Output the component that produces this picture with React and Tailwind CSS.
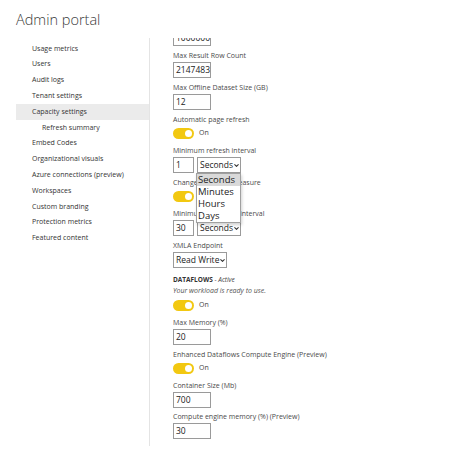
import { ChevronDown } from 'lucide-react';

const navItems = [
   { label: 'Usage metrics' },
   { label: 'Users' },
   { label: 'Audit logs' },
   { label: 'Tenant settings' },
   { label: 'Capacity settings', active: true },
   { label: 'Refresh summary', sub: true },
   { label: 'Embed Codes' },
   { label: 'Organizational visuals' },
   { label: 'Azure connections (preview)' },
   { label: 'Workspaces' },
   { label: 'Custom branding' },
   { label: 'Protection metrics' },
   { label: 'Featured content' },
];

function Label({ children, className = '' }) {
   return (
      <div className={`h-[11px] leading-[11px] text-[7px] text-[#4a4a4a] whitespace-nowrap ${className}`}>
         {children}
      </div>
   );
}

function TextBox({ value, className = 'w-[38px]' }) {
   return (
      <div
         className={`h-[16px] border border-[#9a9a9a] bg-white px-[2px] text-[8.5px] leading-[14px] text-[#222] overflow-hidden ${className}`}
      >
         {value}
      </div>
   );
}

function Select({ value, className = 'w-[44px]', children }) {
   return (
      <div
         className={`relative h-[16px] border border-[#9a9a9a] bg-white pl-[2px] pr-[1px] flex items-center justify-between text-[8.5px] text-[#222] ${className}`}
      >
         <span className="leading-[14px] whitespace-nowrap">{value}</span>
         <ChevronDown size={7} strokeWidth={3.5} className="text-[#333] shrink-0" />
         {children}
      </div>
   );
}

function Toggle({ className = 'mt-[2px]' }) {
   return (
      <div className={`h-[12px] flex items-center gap-[5px] ${className}`}>
         <div className="w-[21px] h-[11px] rounded-full bg-[#f2c811] flex items-center justify-end pr-[2px]">
            <div className="w-[7px] h-[7px] rounded-full bg-white" />
         </div>
         <span className="text-[7px] text-[#444]">On</span>
      </div>
   );
}

export default function App() {
   return (
      <div className="w-[474px] h-[450px] bg-white overflow-hidden font-['Segoe_UI','Open_Sans',sans-serif]">
         <div className="h-[38px] pl-4 pt-[10px] text-[14.5px] font-light leading-[20px] text-[#3a3a3a]">
            Admin portal
         </div>
         <div className="flex">
            <nav className="w-[150px] h-[408px] border-r border-[#e4e4e4] pt-[3px]">
               {navItems.map((item) => (
                  <div
                     key={item.label}
                     className={`ml-4 h-[15.8px] flex items-center text-[7px] text-[#333] whitespace-nowrap ${
                        item.sub ? 'pl-[26px]' : 'pl-4'
                     } ${item.active ? 'bg-[#ebebeb]' : ''}`}
                  >
                     {item.label}
                  </div>
               ))}
            </nav>
            <main className="flex-1 pl-[23px] h-[412px] overflow-hidden">
               <TextBox value="1000000" className="w-[38px] -mt-[8px]" />

               <Label className="mt-[4px]">Max Result Row Count</Label>
               <TextBox value="2147483" className="w-[38px] mt-[1px]" />

               <Label className="mt-[4px]">Max Offline Dataset Size (GB)</Label>
               <TextBox value="12" className="w-[38px] mt-[1px]" />

               <Label className="mt-[4px]">Automatic page refresh</Label>
               <Toggle />

               <Label className="mt-[6px]">Minimum refresh interval</Label>
               <div className="relative z-10 flex gap-[3px] mt-[1px]">
                  <TextBox value="1" className="w-[21px]" />
                  <Select value="Seconds">
                     <div className="absolute left-[-2px] top-[15px] w-[45px] border border-[#a0a0a0] bg-white shadow-[1px_2px_3px_rgba(0,0,0,0.18)] text-[9.5px] text-[#222]">
                        <div className="h-[12px] leading-[12px] px-[1px] bg-[#d9d9d9]">Seconds</div>
                        <div className="h-[12px] leading-[12px] px-[1px]">Minutes</div>
                        <div className="h-[12px] leading-[12px] px-[1px]">Hours</div>
                        <div className="h-[12px] leading-[12px] px-[1px]">Days</div>
                     </div>
                  </Select>
               </div>

               <Label className="mt-[4px]">Change detection measure</Label>
               <Toggle />

               <Label className="mt-[6px]">Minimum execution interval</Label>
               <div className="flex gap-[3px] mt-[1px]">
                  <TextBox value="30" className="w-[21px]" />
                  <Select value="Seconds" />
               </div>

               <Label className="mt-[4px]">XMLA Endpoint</Label>
               <Select value="Read Write" className="w-[54px] mt-[1px]" />

               <div className="mt-[6px] h-[11px] leading-[11px] text-[6.5px] text-[#444] whitespace-nowrap">
                  <span className="font-bold text-[#333]">DATAFLOWS</span>
                  <span className="italic"> - Active</span>
               </div>
               <div className="h-[11px] leading-[11px] text-[7px] italic text-[#555]">Your workload is ready to use.</div>
               <Toggle className="mt-[3px]" />

               <Label className="mt-[6px]">Max Memory (%)</Label>
               <TextBox value="20" className="w-[38px] mt-[1px]" />

               <Label className="mt-[4px]">Enhanced Dataflows Compute Engine (Preview)</Label>
               <Toggle />

               <Label className="mt-[6px]">Container Size (Mb)</Label>
               <TextBox value="700" className="w-[38px] mt-[1px]" />

               <Label className="mt-[3px]">Compute engine memory (%) (Preview)</Label>
               <TextBox value="30" className="w-[38px] mt-[1px]" />
            </main>
         </div>
      </div>
   );
}
